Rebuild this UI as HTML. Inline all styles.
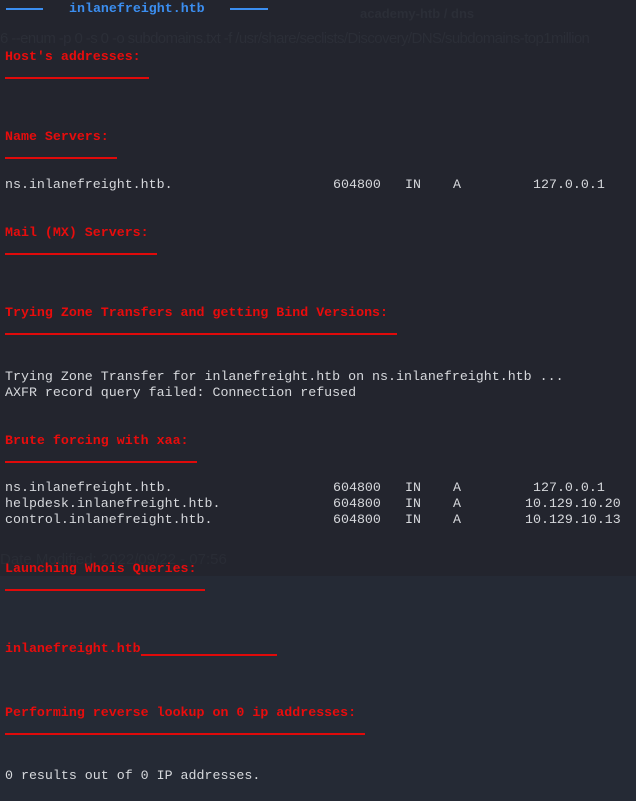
<!DOCTYPE html>
<html><head><meta charset="utf-8"><style>
html,body{margin:0;padding:0}
body{width:636px;height:801px;overflow:hidden;position:relative;background:#23252e;font-family:"Liberation Mono",monospace;font-size:13.3px;color:#d6d8dc}
.low{position:absolute;left:0;top:576px;width:636px;height:225px;background:#252a35}
.t{position:absolute;white-space:pre;line-height:16px}
.r{color:#e80c0c;font-weight:bold}
.b{color:#3b8ef0;font-weight:bold}
.u{position:absolute;left:5px;height:2px;background:#e00a0a}
.bl{position:absolute;height:2px;background:#3b8ef0;top:8px}
.w{position:absolute;white-space:pre;font-family:"Liberation Sans",sans-serif;color:#2b2e37}
</style></head><body>
<div class="low"></div>
<div class="w" style="left:360px;top:6px;font-size:13px;font-weight:bold">academy-htb / dns</div>
<div class="w" style="left:0;top:30px;font-size:15px;letter-spacing:-0.6px">6 --enum -p 0 -s 0 -o subdomains.txt -f /usr/share/seclists/Discovery/DNS/subdomains-top1million</div>
<div class="w" style="left:0;top:551px;font-size:15px;color:#292c35">Date Modified: 2022/09/22 - 07:56</div>

<div class="bl" style="left:6px;width:37px"></div>
<div class="t b" style="left:69px;top:1px">inlanefreight.htb</div>
<div class="bl" style="left:230px;width:38px"></div>

<div class="t r" style="left:5px;top:49px">Host's addresses:</div>
<div class="u" style="top:77px;width:144px"></div>

<div class="t r" style="left:5px;top:129px">Name Servers:</div>
<div class="u" style="top:157px;width:112px"></div>

<div class="t" style="left:5px;top:177px">ns.inlanefreight.htb.</div>
<div class="t" style="left:333px;top:177px">604800</div>
<div class="t" style="left:405px;top:177px">IN</div>
<div class="t" style="left:453px;top:177px">A</div>
<div class="t" style="left:533px;top:177px">127.0.0.1</div>

<div class="t r" style="left:5px;top:225px">Mail (MX) Servers:</div>
<div class="u" style="top:253px;width:152px"></div>

<div class="t r" style="left:5px;top:305px">Trying Zone Transfers and getting Bind Versions:</div>
<div class="u" style="top:333px;width:392px"></div>

<div class="t" style="left:5px;top:369px">Trying Zone Transfer for inlanefreight.htb on ns.inlanefreight.htb ...</div>
<div class="t" style="left:5px;top:385px">AXFR record query failed: Connection refused</div>

<div class="t r" style="left:5px;top:433px">Brute forcing with xaa:</div>
<div class="u" style="top:461px;width:192px"></div>

<div class="t" style="left:5px;top:480px">ns.inlanefreight.htb.</div>
<div class="t" style="left:5px;top:496px">helpdesk.inlanefreight.htb.</div>
<div class="t" style="left:5px;top:512px">control.inlanefreight.htb.</div>
<div class="t" style="left:333px;top:480px">604800
604800
604800</div>
<div class="t" style="left:405px;top:480px">IN
IN
IN</div>
<div class="t" style="left:453px;top:480px">A
A
A</div>
<div class="t" style="left:533px;top:480px">127.0.0.1</div>
<div class="t" style="left:525px;top:496px">10.129.10.20
10.129.10.13</div>

<div class="t r" style="left:5px;top:561px">Launching Whois Queries:</div>
<div class="u" style="top:589px;width:200px"></div>

<div class="t r" style="left:5px;top:641px">inlanefreight.htb</div>
<div class="u" style="left:141px;top:654px;width:136px"></div>

<div class="t r" style="left:5px;top:705px">Performing reverse lookup on 0 ip addresses:</div>
<div class="u" style="top:733px;width:360px"></div>

<div class="t" style="left:5px;top:768px">0 results out of 0 IP addresses.</div>
</body></html>
